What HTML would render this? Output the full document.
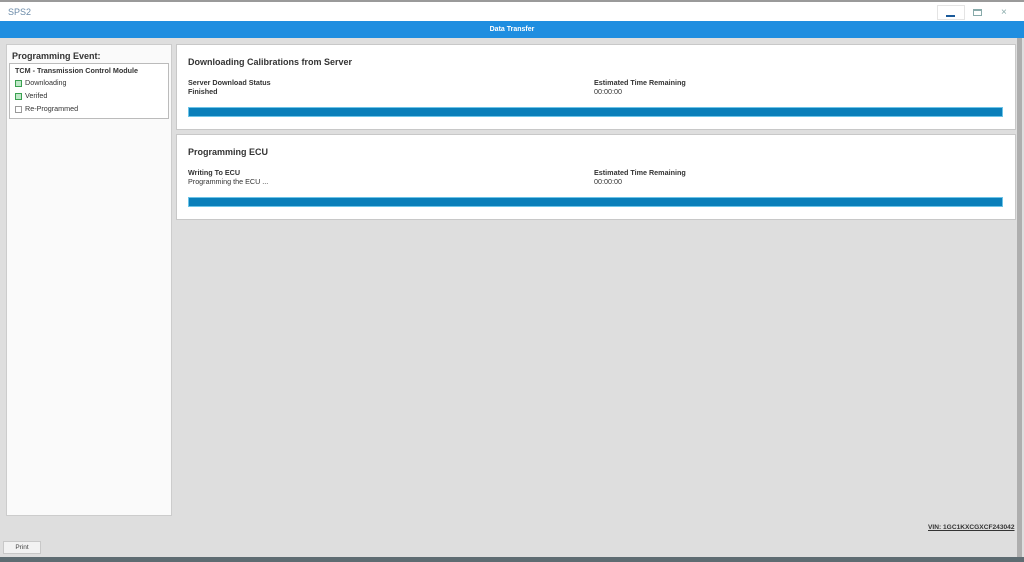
<!DOCTYPE html>
<html><head><meta charset="utf-8"><style>
*{margin:0;padding:0;box-sizing:border-box}
body{width:1024px;height:562px;overflow:hidden;background:#dedede;font-family:"Liberation Sans",sans-serif;position:relative;color:#333}
.abs{position:absolute}
#title{left:0;top:0;width:1024px;height:21px;background:#fff;border-top:2px solid #9a9a9a}
#title span{position:absolute;left:8px;top:5px;font-size:9px;color:#6a8aa8}
#bar{left:0;top:21px;width:1024px;height:17px;background:#1f8ee0;color:#fff;font-size:7px;font-weight:bold;text-align:center;line-height:17px}
#left{left:6px;top:44px;width:166px;height:472px;background:#fafafa;border:1px solid #ccc}
#inner{left:9px;top:63px;width:160px;height:56px;border:1px solid #bbb;background:#fff}
.t{font-size:7.2px;color:#333}
.card{left:176px;width:840px;height:86px;background:#fff;border:1px solid #c8c8c8}
.pb{left:188px;width:815px;height:10px;background:#0a7fba;border:1px solid #6cc4e8}
.chk{width:7px;height:7px;border:1px solid #999;background:#fff;display:inline-block;vertical-align:middle;margin-right:3px}
.g{background:#bfe8c8;border-color:#3aa050}
#rs{left:1017px;top:38px;width:5px;height:520px;background:#aeaeae}
#bot{left:0;top:557px;width:1024px;height:5px;background:#5e6c72}
</style></head><body>
<div id="title" class="abs"><span>SPS2</span>
<div class="abs" style="left:937px;top:3px;width:28px;height:15px;border:1px solid #e4e4e4"></div>
<div class="abs" style="left:946px;top:13px;width:9px;height:2px;background:#1a5a9a"></div>
<div class="abs" style="left:973px;top:7px;width:9px;height:7px;border:1px solid #8aa;border-top-width:2px"></div>
<div class="abs" style="left:1001px;top:5px;font-size:10px;color:#8aa">×</div>
</div>
<div id="bar" class="abs">Data Transfer</div>
<div id="left" class="abs"></div>
<div class="abs" style="left:12px;top:51px;font-size:9px;font-weight:bold;color:#333">Programming Event:</div>
<div id="inner" class="abs"></div>
<div class="abs t" style="left:15px;top:66px;font-weight:bold">TCM - Transmission Control Module</div>
<div class="abs t" style="left:15px;top:78px"><span class="chk g"></span>Downloading</div>
<div class="abs t" style="left:15px;top:91px"><span class="chk g"></span>Verifed</div>
<div class="abs t" style="left:15px;top:104px"><span class="chk"></span>Re-Programmed</div>

<div class="abs card" style="top:44px"></div>
<div class="abs" style="left:188px;top:57px;font-size:9px;font-weight:bold">Downloading Calibrations from Server</div>
<div class="abs t" style="left:188px;top:79px;font-weight:bold;line-height:8.5px">Server Download Status<br>Finished</div>
<div class="abs t" style="left:594px;top:79px;line-height:8.5px"><b>Estimated Time Remaining</b><br>00:00:00</div>
<div class="abs pb" style="top:107px"></div>

<div class="abs card" style="top:134px"></div>
<div class="abs" style="left:188px;top:147px;font-size:9px;font-weight:bold">Programming ECU</div>
<div class="abs t" style="left:188px;top:169px;line-height:8.5px"><b>Writing To ECU</b><br>Programming the ECU ...</div>
<div class="abs t" style="left:594px;top:169px;line-height:8.5px"><b>Estimated Time Remaining</b><br>00:00:00</div>
<div class="abs pb" style="top:197px"></div>

<div id="rs" class="abs"></div>
<div class="abs" style="left:928px;top:524px;font-size:6.6px;font-weight:bold;text-decoration:underline;color:#333">VIN: 1GC1KXCGXCF243042</div>
<div class="abs" style="left:3px;top:541px;width:38px;height:13px;border:1px solid #c8c8c8;background:#f2f2f2;font-size:6.5px;text-align:center;line-height:12px;color:#444">Print</div>
<div id="bot" class="abs"></div>
</body></html>
